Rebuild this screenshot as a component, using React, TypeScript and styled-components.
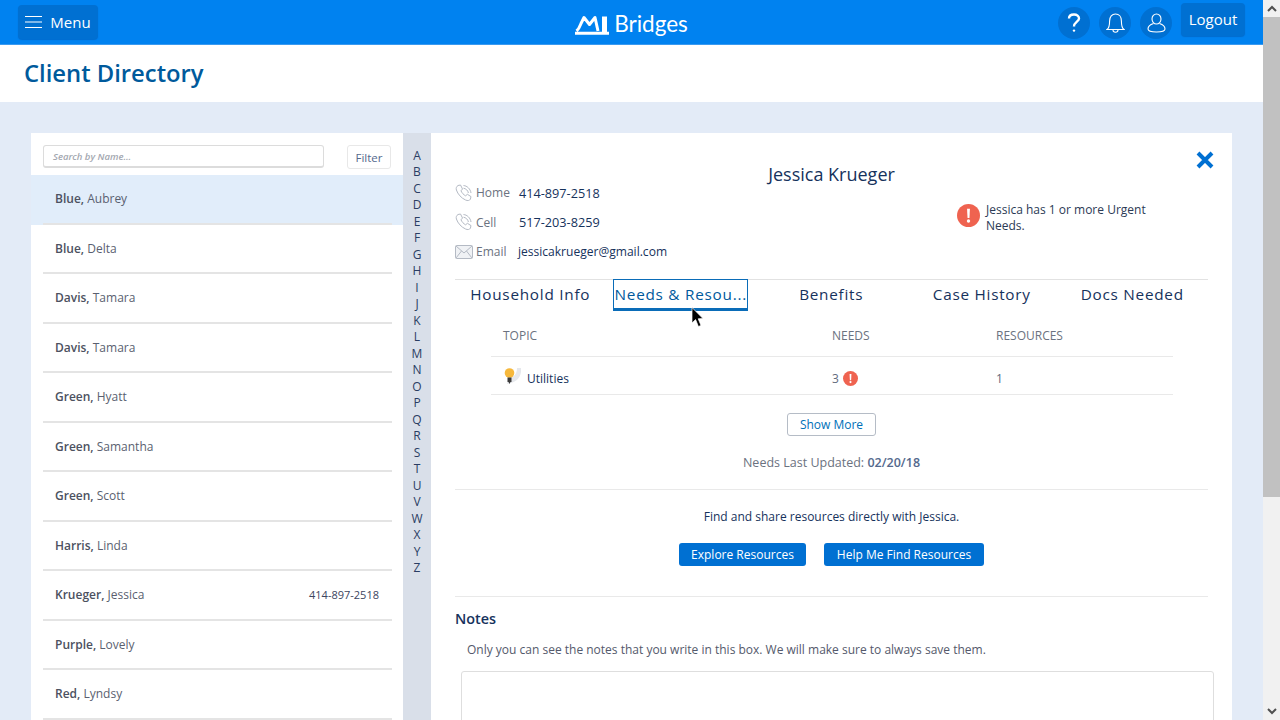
import { createGlobalStyle } from "styled-components";
import styled from "styled-components";

const Global = createGlobalStyle`
  html, body { margin: 0; padding: 0; overflow: hidden; }
  body { font-family: "Open Sans", "Liberation Sans", sans-serif; color: #16325c; }
  * { box-sizing: border-box; }
`;

const Shell = styled.div`
  display: flex;
  width: 1280px;
  height: 720px;
  overflow: hidden;
  position: relative;
`;

const Page = styled.div`
  width: 1263px;
  height: 720px;
  overflow: hidden;
  background: #e3ebf7;
  flex-shrink: 0;
`;

const Scrollbar = styled.div`
  width: 17px;
  height: 720px;
  background: #f1f1f1;
  display: flex;
  flex-direction: column;
`;

const ScrollArrow = styled.div`
  height: 17px;
  display: flex;
  align-items: center;
  justify-content: center;
`;

const ScrollThumb = styled.div`
  height: 480px;
  background: #c1c1c1;
`;

const ScrollSpace = styled.div`
  flex: 1;
`;

const Header = styled.header`
  height: 45px;
  background: #0082f0;
  border-bottom: 1px solid #3a9af0;
  display: grid;
  grid-template-columns: 1fr auto 1fr;
  align-items: center;
  padding: 0 18px;
`;

const HeaderLeft = styled.div`
  display: flex;
`;

const HeaderRight = styled.div`
  display: flex;
  justify-content: flex-end;
  align-items: center;
  gap: 9px;
  margin-top: 2px;
`;

const HeadButton = styled.div`
  width: 64px;
  height: 33px;
  background: #0070d2;
  border-radius: 4px;
  color: #fff;
  font-size: 15px;
  display: flex;
  align-items: center;
  justify-content: center;
  gap: 8px;
  margin-top: -8px;
  box-shadow: 0 1px 1px rgba(0, 60, 130, 0.3);
`;

const MenuButton = styled(HeadButton)`
  width: 80px;
  height: 34px;
  margin-top: -1px;
`;

const RoundIcon = styled.div`
  width: 32px;
  height: 32px;
  border-radius: 50%;
  background: #0070d2;
  display: flex;
  align-items: center;
  justify-content: center;
`;

const Logo = styled.div`
  display: flex;
  align-items: center;
  gap: 5px;
  color: #fff;
  font-family: "Lato", sans-serif;
  font-size: 22.5px;
  line-height: 1;
  margin-top: 5px;
`;

const TitleBand = styled.div`
  height: 57px;
  background: #fff;
  padding: 11px 24px 0;
`;

const Title = styled.h1`
  margin: 0;
  font-size: 23.8px;
  line-height: 34px;
  font-weight: 600;
  color: #005a9c;
`;

const Body = styled.div`
  display: flex;
  margin: 31px 31px 0;
  height: 600px;
`;

const ListPanel = styled.aside`
  width: 372px;
  background: #fff;
`;

const SearchBar = styled.div`
  height: 42px;
  padding: 12px 12px 0;
  display: flex;
  justify-content: space-between;
  align-items: flex-start;
`;

const SearchInput = styled.div`
  width: 281px;
  height: 23px;
  border: 1px solid #dcdcdc;
  border-bottom-width: 2px;
  border-radius: 3px;
  font-size: 9.5px;
  font-style: italic;
  font-weight: 600;
  color: #a3a7b0;
  padding-left: 9px;
  line-height: 21px;
`;

const FilterButton = styled.div`
  width: 44px;
  height: 24px;
  border: 1px solid #e8e8e8;
  border-radius: 3px;
  font-size: 11.5px;
  color: #54698d;
  text-align: center;
  line-height: 23px;
`;

const Row = styled.div<{ $selected?: boolean }>`
  height: 49.5px;
  padding: 0 11px 0 12px;
  background: ${(p) => (p.$selected ? "#e1edfa" : "#fff")};
`;

const RowInner = styled.div`
  height: 100%;
  padding: 0 13px 0 12px;
  display: flex;
  align-items: center;
  justify-content: space-between;
  border-bottom: 2px solid #e4e4e4;
  font-size: 12px;
  color: #5a5f70;
`;

const LastName = styled.b`
  font-weight: 600;
  color: #4c5160;
`;

const RowPhone = styled.span`
  font-size: 11px;
  color: #3c4560;
`;

const Letters = styled.nav`
  width: 28px;
  background: #d9dfe9;
  padding-top: 14.5px;
  display: flex;
  flex-direction: column;
  align-items: center;
`;

const Letter = styled.span`
  height: 16.5px;
  line-height: 16.5px;
  font-size: 12px;
  color: #2a3d63;
`;

const Detail = styled.main`
  width: 801px;
  background: #fff;
  padding: 0 24px;
  position: relative;
`;

const CloseButton = styled.div`
  position: absolute;
  top: 17px;
  right: 17px;
  width: 20px;
  height: 20px;
`;

const Name = styled.h2`
  margin: 0;
  padding-top: 30px;
  height: 47px;
  text-align: center;
  font-size: 18px;
  line-height: 22px;
  font-weight: 400;
  color: #16325c;
`;

const Top = styled.div`
  display: flex;
  justify-content: space-between;
  height: 100px;
  border-bottom: 1px solid #e2e2e2;
`;

const Contacts = styled.div`
  display: flex;
  flex-direction: column;
  margin-top: -2px;
`;

const ContactRow = styled.div`
  height: 29.5px;
  display: flex;
  align-items: center;
  font-size: 12.7px;
  color: #16325c;
`;

const ContactLabel = styled.span<{ $w: number }>`
  width: ${(p) => p.$w}px;
  color: #6b7280;
  font-size: 12px;
  margin-left: 3px;
`;

const ContactEmail = styled.span`
  font-size: 12.05px;
`;

const AlertBox = styled.div`
  width: 251px;
  display: flex;
  gap: 6px;
  font-size: 12px;
  line-height: 16px;
  color: #2b3a55;
  padding-top: 22px;
`;

const AlertText = styled.span`
  width: 190px;
`;

const AlertMark = styled.div`
  margin-top: 2px;
`;

const Tabs = styled.div`
  display: grid;
  grid-template-columns: repeat(5, 150.5px);
  height: 48px;
  margin-top: -1px;
`;

const Tab = styled.div<{ $active?: boolean }>`
  justify-self: center;
  width: 135px;
  height: 32px;
  text-align: center;
  line-height: 29px;
  font-size: 15.3px;
  letter-spacing: 0.75px;
  white-space: nowrap;
  overflow: hidden;
  color: ${(p) => (p.$active ? "#00599c" : "#16325c")};
  border: ${(p) => (p.$active ? "1.5px solid #0a6cb8" : "1.5px solid transparent")};
  border-bottom-width: ${(p) => (p.$active ? "3px" : "1.5px")};
`;

const Table = styled.div`
  margin: 0 35px 0 36px;
`;

const TableHead = styled.div`
  height: 30px;
  display: grid;
  grid-template-columns: 329px 164px 1fr;
  align-items: center;
  padding: 0 0 13px 12px;
  border-bottom: 1px solid #e9e9e9;
`;

const TableRow = styled(TableHead)`
  height: 38px;
  padding: 6px 0 0 12px;
`;

const HeadCell = styled.span`
  font-size: 12px;
  color: #6b7280;
`;

const Cell = styled.span`
  display: flex;
  align-items: center;
  gap: 4px;
  font-size: 12px;
  color: #5f6b7e;
`;

const TopicCell = styled(Cell)`
  gap: 6px;
  color: #16325c;
`;

const TopicIcon = styled.svg`
  margin-top: -6px;
`;

const Center = styled.div`
  display: flex;
  justify-content: center;
`;

const ShowMore = styled.div`
  margin-top: 18px;
  width: 89px;
  height: 23px;
  border: 1px solid #b5bcc6;
  border-radius: 3px;
  font-size: 12px;
  line-height: 21px;
  text-align: center;
  color: #0070b8;
`;

const Updated = styled.div`
  height: 38px;
  margin-top: 16px;
  padding-top: 3px;
  text-align: center;
  font-size: 12.5px;
  line-height: 16px;
  color: #6b7280;
  border-bottom: 1px solid #e9e9e9;
`;

const UpdatedDate = styled.b`
  font-weight: 600;
  color: #54698d;
`;

const FindText = styled.div`
  margin-top: 18px;
  text-align: center;
  font-size: 12px;
  line-height: 18px;
  color: #16325c;
`;

const Actions = styled.div`
  margin-top: 17px;
  height: 54px;
  display: flex;
  justify-content: center;
  gap: 18px;
  border-bottom: 1px solid #e9e9e9;
`;

const Primary = styled.div<{ $w: number }>`
  width: ${(p) => p.$w}px;
  height: 23px;
  border-radius: 3px;
  background: #0070d2;
  color: #fff;
  font-size: 12px;
  line-height: 23px;
  text-align: center;
`;

const NotesTitle = styled.h3`
  margin: 12px 0 0;
  font-size: 14.4px;
  line-height: 20px;
  font-weight: 600;
  color: #16325c;
`;

const NotesHint = styled.p`
  margin: 13px 0 0 12px;
  font-size: 12px;
  line-height: 16px;
  color: #54596b;
`;

const NotesBox = styled.div`
  margin: 13px 0 0 6px;
  width: 753px;
  height: 100px;
  border: 1px solid #dedede;
  border-radius: 3px;
`;

const Cursor = styled.svg`
  position: absolute;
  left: 691px;
  top: 307px;
`;

const names: [string, string, string?][] = [
  ["Blue", "Aubrey"],
  ["Blue", "Delta"],
  ["Davis", "Tamara"],
  ["Davis", "Tamara"],
  ["Green", "Hyatt"],
  ["Green", "Samantha"],
  ["Green", "Scott"],
  ["Harris", "Linda"],
  ["Krueger", "Jessica", "414-897-2518"],
  ["Purple", "Lovely"],
  ["Red", "Lyndsy"],
];

const PhoneIcon = () => (
  <svg width="18" height="18" viewBox="0 0 18 18" fill="none" stroke="#b4bac4" strokeWidth="1">
    <path d="M3 1.5 L5.5 1 L7.5 5 L6 6.8 C6.8 8.8 8.6 10.8 10.6 11.8 L12.4 10.3 L16 12.6 L15.4 15.2 C14.6 16.6 12.6 17 10.6 16 C6.4 14.2 2.8 10.2 1.4 6 C0.8 4 1.6 2.4 3 1.5 Z" />
    <path d="M8.5 1.5 C12 1.8 15.4 4.8 16 9" />
    <path d="M8.5 4.2 C10.8 4.6 13 6.4 13.4 9" />
  </svg>
);

const MailIcon = () => (
  <svg width="18" height="14" viewBox="0 0 18 14" fill="#f0f2f5" stroke="#b4bac4" strokeWidth="1">
    <rect x="0.5" y="0.5" width="17" height="13" rx="1" />
    <path d="M1 1 L9 8 L17 1 M1 13 L6.5 6 M17 13 L11.5 6" fill="none" />
  </svg>
);

const AlertIcon = ({ size }: { size: number }) => (
  <svg width={size} height={size} viewBox="0 0 22 22">
    <circle cx="11" cy="11" r="11" fill="#ef6350" />
    <path d="M9.6 4.5 h2.8 l-0.5 9 h-1.8 z" fill="#fff" />
    <circle cx="11" cy="16.3" r="1.6" fill="#fff" />
  </svg>
);

export default function App() {
  return (
    <Shell>
      <Global />
      <Page>
        <Header>
          <HeaderLeft>
            <MenuButton>
              <svg width="17" height="14" viewBox="0 0 17 14" stroke="#fff" strokeWidth="1.2">
                <path d="M0 1.5 H17 M0 7 H17 M0 12.5 H17" />
              </svg>
              Menu
            </MenuButton>
          </HeaderLeft>
          <Logo>
            <svg width="34" height="20" viewBox="0 0 34 20" fill="none" stroke="#fff">
              <path d="M1.5 16 C4 14 5 11 6 8.5 L9 2.5 L14.5 9.5 L20 2.5 L23 16" strokeWidth="3" strokeLinejoin="round" />
              <path d="M0 18.3 H34" strokeWidth="3" />
              <path d="M29.5 1.5 V18" strokeWidth="5" />
            </svg>
            Bridges
          </Logo>
          <HeaderRight>
            <RoundIcon>
              <svg width="14" height="20" viewBox="0 0 14 20" fill="none" stroke="#fff" strokeWidth="2.4">
                <path d="M2 5.5 C2 2.8 4.2 1.5 7 1.5 C10 1.5 12 3.2 12 5.5 C12 8.5 7 9 7 13.5" />
                <circle cx="7" cy="17.6" r="1.2" fill="#fff" stroke="none" />
              </svg>
            </RoundIcon>
            <RoundIcon>
              <svg width="19" height="21" viewBox="0 0 19 21" fill="none" stroke="#fff" strokeWidth="1.1">
                <path d="M1 16.5 C3.5 15 3.6 12 3.6 8 C3.6 3.8 6 1 9.5 1 C13 1 15.4 3.8 15.4 8 C15.4 12 15.5 15 18 16.5 Z" />
                <path d="M7 17 C7 20 12 20 12 17" />
              </svg>
            </RoundIcon>
            <RoundIcon>
              <svg width="19" height="20" viewBox="0 0 19 20" fill="none" stroke="#fff" strokeWidth="1.1">
                <ellipse cx="9.5" cy="6" rx="4.5" ry="5" />
                <path d="M6.5 10.5 C3.5 11.5 1 13.5 1 16 C1 18 3 19 9.5 19 C16 19 18 18 18 16 C18 13.5 15.5 11.5 12.5 10.5" />
              </svg>
            </RoundIcon>
            <HeadButton>Logout</HeadButton>
          </HeaderRight>
        </Header>
        <TitleBand>
          <Title>Client Directory</Title>
        </TitleBand>
        <Body>
          <ListPanel>
            <SearchBar>
              <SearchInput>Search by Name...</SearchInput>
              <FilterButton>Filter</FilterButton>
            </SearchBar>
            {names.map(([last, first, phone], i) => (
              <Row key={i} $selected={i === 0}>
                <RowInner>
                  <span>
                    <LastName>{last},</LastName> {first}
                  </span>
                  {phone && <RowPhone>{phone}</RowPhone>}
                </RowInner>
              </Row>
            ))}
          </ListPanel>
          <Letters>
            {"ABCDEFGHIJKLMNOPQRSTUVWXYZ".split("").map((l) => (
              <Letter key={l}>{l}</Letter>
            ))}
          </Letters>
          <Detail>
            <CloseButton>
              <svg width="20" height="20" viewBox="0 0 20 20" stroke="#0070d2" strokeWidth="4">
                <path d="M3 3 L17 17 M17 3 L3 17" />
              </svg>
            </CloseButton>
            <Name>Jessica Krueger</Name>
            <Top>
              <Contacts>
                <ContactRow>
                  <PhoneIcon />
                  <ContactLabel $w={43}>Home</ContactLabel>
                  414-897-2518
                </ContactRow>
                <ContactRow>
                  <PhoneIcon />
                  <ContactLabel $w={43}>Cell</ContactLabel>
                  517-203-8259
                </ContactRow>
                <ContactRow>
                  <MailIcon />
                  <ContactLabel $w={42}>Email</ContactLabel>
                  <ContactEmail>jessicakrueger@gmail.com</ContactEmail>
                </ContactRow>
              </Contacts>
              <AlertBox>
                <AlertMark>
                  <AlertIcon size={23} />
                </AlertMark>
                <AlertText>Jessica has 1 or more Urgent Needs.</AlertText>
              </AlertBox>
            </Top>
            <Tabs>
              <Tab>Household Info</Tab>
              <Tab $active>Needs &amp; Resou...</Tab>
              <Tab>Benefits</Tab>
              <Tab>Case History</Tab>
              <Tab>Docs Needed</Tab>
            </Tabs>
            <Table>
              <TableHead>
                <HeadCell>TOPIC</HeadCell>
                <HeadCell>NEEDS</HeadCell>
                <HeadCell>RESOURCES</HeadCell>
              </TableHead>
              <TableRow>
                <TopicCell>
                  <TopicIcon width="18" height="18" viewBox="0 0 18 18" fill="none">
                    <path d="M14 1 H18 V5 C17 11 14 14 8 16 L4 17 L6 11 C11 10 14 7 14 1 Z" fill="#e6e8ec" />
                    <circle cx="6.5" cy="6" r="4.8" fill="#f6b83c" />
                    <rect x="4.5" y="10.5" width="4" height="4.5" fill="#3b3b3b" />
                    <path d="M5.5 15 H7.5 L6.5 17 Z" fill="#3b3b3b" />
                  </TopicIcon>
                  Utilities
                </TopicCell>
                <Cell>
                  3 <AlertIcon size={15} />
                </Cell>
                <Cell>1</Cell>
              </TableRow>
            </Table>
            <Center>
              <ShowMore>Show More</ShowMore>
            </Center>
            <Updated>
              Needs Last Updated: <UpdatedDate>02/20/18</UpdatedDate>
            </Updated>
            <FindText>Find and share resources directly with Jessica.</FindText>
            <Actions>
              <Primary $w={127}>Explore Resources</Primary>
              <Primary $w={160}>Help Me Find Resources</Primary>
            </Actions>
            <NotesTitle>Notes</NotesTitle>
            <NotesHint>Only you can see the notes that you write in this box. We will make sure to always save them.</NotesHint>
            <NotesBox />
          </Detail>
        </Body>
      </Page>
      <Scrollbar>
        <ScrollArrow>
          <svg width="10" height="7" viewBox="0 0 10 7" fill="none" stroke="#505050" strokeWidth="2">
            <path d="M1 6 L5 2 L9 6" />
          </svg>
        </ScrollArrow>
        <ScrollThumb />
        <ScrollSpace />
        <ScrollArrow>
          <svg width="10" height="7" viewBox="0 0 10 7" fill="none" stroke="#505050" strokeWidth="2">
            <path d="M1 1 L5 5 L9 1" />
          </svg>
        </ScrollArrow>
      </Scrollbar>
      <Cursor width="13" height="21" viewBox="0 0 13 21">
        <path d="M1 0.5 V16 L4.6 12.6 L7.4 19.5 L10 18.4 L7.2 11.8 L12 11.6 Z" fill="#000" stroke="#fff" strokeWidth="0.7" />
      </Cursor>
    </Shell>
  );
}
